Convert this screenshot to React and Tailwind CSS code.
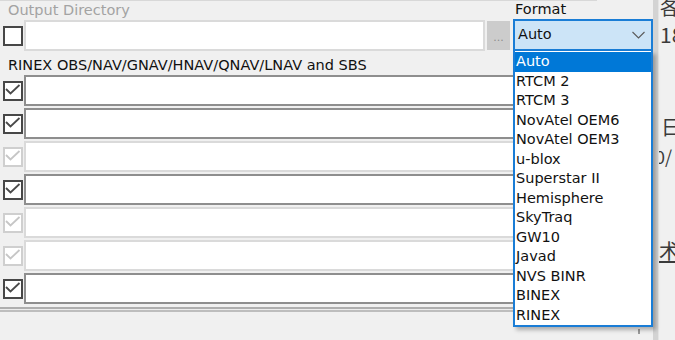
import React from 'react';

const formats = [
  'Auto', 'RTCM 2', 'RTCM 3', 'NovAtel OEM6', 'NovAtel OEM3', 'u-blox', 'Superstar II',
  'Hemisphere', 'SkyTraq', 'GW10', 'Javad', 'NVS BINR', 'BINEX', 'RINEX',
];

// enabled = dark frame, disabled = greyed frame
const rows = [true, true, false, true, false, false, true];

function CheckBox({ checked, enabled }) {
  return (
    <div
      className={`w-[20px] h-[20px] shrink-0 bg-white border-2 ${
        enabled ? 'border-[#474747]' : 'border-[#cfcfcf]'
      }`}
    >
      {checked && (
        <svg width="16" height="16" viewBox="0 0 16 16">
          <path
            d="M1 6 L5.5 10.5 L14.5 2"
            fill="none"
            stroke={enabled ? '#4a4a4a' : '#c6c6c6'}
            strokeWidth="1.8"
          />
        </svg>
      )}
    </div>
  );
}

function PathRow({ enabled }) {
  return (
    <div className="flex items-center h-[31px] mb-[2px]">
      <div className="ml-[3px]">
        <CheckBox checked enabled={enabled} />
      </div>
      <div
        className={`ml-[1px] h-[31px] w-[626px] bg-white border-2 ${
          enabled ? 'border-[#8e8e8e]' : 'border-[#dadada]'
        }`}
      />
    </div>
  );
}

export default function App() {
  return (
    <div className="h-[340px] w-[675px] overflow-hidden bg-[#f0f0f0] flex font-['DejaVu_Sans',sans-serif] text-[14.5px] text-[#111111]">
      {/* left panel */}
      <div className="w-[653px] shrink-0 flex flex-col">
        <div className="h-px w-[597px] bg-[#d8d8d8]" />
        <div className="flex">
          <div className="w-[513px]">
            <div className="h-[19px] pl-[8px] leading-[18px] text-[#a3a3a3]">Output Directory</div>
            <div className="flex items-center h-[31px]">
              <div className="ml-[3px]">
                <CheckBox checked={false} enabled />
              </div>
              <div className="ml-[1px] h-[31px] w-[461px] bg-white border-2 border-[#dadada]" />
              <div className="ml-[2px] h-[29px] w-[23px] bg-[#cccccc] flex items-end justify-center pb-[6px] text-[11px] leading-[12px] text-[#8c8c8c]">
                ...
              </div>
            </div>
          </div>

          {/* format combo with open list */}
          <div className="w-[140px]">
            <div className="h-[18px] pl-[2px] leading-[17px]">Format</div>
            <div className="relative">
              <div className="h-[32px] bg-[#cce4f7] border-2 border-[#1a7dd6] flex items-center justify-between pl-[3px] pr-[6px]">
                <span>Auto</span>
                <svg width="13" height="8" viewBox="0 0 13 8">
                  <path d="M0.5 1 L6.5 7 L12.5 1" fill="none" stroke="#5a5a5a" strokeWidth="1.1" />
                </svg>
              </div>
              <div className="absolute left-0 top-[32px] z-10 w-[140px] bg-white border-2 border-t-0 border-[#1a7dd6] pt-px shadow-[3px_3px_4px_rgba(0,0,0,0.28)]">
                {formats.map((f, i) => (
                  <div
                    key={f}
                    className={`h-[19.5px] leading-[19.5px] pl-[1px] whitespace-nowrap ${
                      i === 0 ? 'bg-[#0078d7] text-white' : ''
                    }`}
                  >
                    {f}
                  </div>
                ))}
              </div>
            </div>
          </div>
        </div>

        <div className="h-[24px] pl-[8px] pt-[6px] leading-[17px]">RINEX OBS/NAV/GNAV/HNAV/QNAV/LNAV and SBS</div>

        {rows.map((en, i) => (
          <PathRow key={i} enabled={en} />
        ))}

        <div className="mt-px h-[5px] border-t-2 border-b-2 border-t-[#aeaeae] border-b-[#bdbdbd] bg-[#ececec]" />
        <div className="ml-[638px] mt-[17px] h-[5px] w-[2px] bg-[#9a9a9a]" />
      </div>

      {/* splitter */}
      <div className="w-[6px] shrink-0 bg-[#d3d3d3] border-r border-[#e4e4e4]" />

      {/* neighbouring panel, clipped */}
      <div className="w-[16px] shrink-0 overflow-hidden font-['Noto_Sans_CJK_SC',sans-serif] text-[#3a3a3a]">
        <div className="-mt-[5px] ml-[1px] h-[24px] text-[19px] leading-[24px] whitespace-nowrap">各项</div>
        <div className="mt-[4px] ml-[1px] h-[22px] text-[21px] leading-[22px] whitespace-nowrap">18</div>
        <div className="mt-[70px] ml-[2px] h-[24px] text-[20px] leading-[24px] whitespace-nowrap">日期</div>
        <div className="mt-[6px] -ml-[14px] h-[22px] text-[18px] leading-[22px] whitespace-nowrap">20/</div>
        <div className="mt-[72px] h-[24px] text-[20px] leading-[24px] whitespace-nowrap underline underline-offset-[2px]">术语</div>
      </div>
    </div>
  );
}
